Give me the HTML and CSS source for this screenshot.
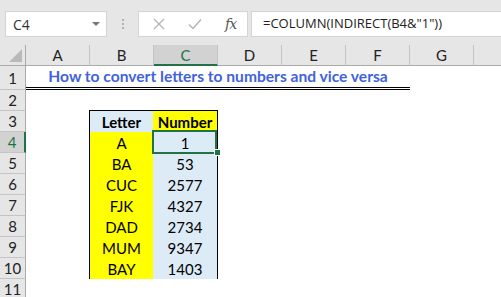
FILE: index.html
```html
<!DOCTYPE html>
<html>
<head>
<meta charset="utf-8">
<link rel="stylesheet" href="styles.css">
</head>
<body>
<div class="app">
  <div class="toolbar">
    <div class="namebox"><span class="ref">C4</span><span class="caret"></span></div>
    <div class="grip"><i></i><i></i><i></i></div>
    <div class="fxbox">
      <svg class="ico" width="12" height="12" viewBox="0 0 12 12"><path d="M1 1L11 11M11 1L1 11" stroke="#b4b4b4" stroke-width="1.3" fill="none"/></svg>
      <svg class="ico" width="14" height="12" viewBox="0 0 14 12"><path d="M1 6.5L5 10.5L13 1.5" stroke="#b4b4b4" stroke-width="1.5" fill="none"/></svg>
      <span class="fx">fx</span>
    </div>
    <div class="formula">=COLUMN(INDIRECT(B4&amp;"1"))</div>
  </div>
  <div class="sheet">
    <div class="corner"><span class="tri"></span></div>
    <div class="colh">A</div>
    <div class="colh">B</div>
    <div class="colh sel">C</div>
    <div class="colh">D</div>
    <div class="colh">E</div>
    <div class="colh">F</div>
    <div class="colh">G</div>
    <div class="colh last"></div>

    <div class="rowh r1">1</div>
    <div class="title">How to convert letters to numbers and vice versa</div>
    <div class="rowh">2</div>
    <div class="rowh">3</div>
    <div class="rowh sel">4</div>
    <div class="rowh">5</div>
    <div class="rowh">6</div>
    <div class="rowh">7</div>
    <div class="rowh">8</div>
    <div class="rowh">9</div>
    <div class="rowh">10</div>
    <div class="rowh">11</div>

    <div class="tbl">
      <div class="c hd blue">Letter</div>
      <div class="c hd yellow">Number</div>
      <div class="c yellow">A</div>
      <div class="c blue active">1<span class="selbox"></span><span class="handle"></span></div>
      <div class="c yellow">BA</div>
      <div class="c blue">53</div>
      <div class="c yellow">CUC</div>
      <div class="c blue">2577</div>
      <div class="c yellow">FJK</div>
      <div class="c blue">4327</div>
      <div class="c yellow">DAD</div>
      <div class="c blue">2734</div>
      <div class="c yellow">MUM</div>
      <div class="c blue">9347</div>
      <div class="c yellow">BAY</div>
      <div class="c blue">1403</div>
    </div>
  </div>
</div>
</body>
</html>
```
FILE: styles.css
```css
* { box-sizing: border-box; }
html, body { margin: 0; padding: 0; background: #fff; }
.app { width: 501px; height: 297px; overflow: hidden; font-family: "Lato", "Liberation Sans", sans-serif; }

.toolbar {
  height: 45px;
  background: #e6e6e6;
  display: flex;
  align-items: flex-start;
  padding-top: 11px;
  padding-left: 5px;
}
.namebox {
  width: 102px; height: 26px;
  background: #fff;
  border: 1px solid #d4d4d4;
  display: flex; align-items: center; justify-content: space-between;
  padding: 0 6px 0 7px;
}
.ref { font-family: "Open Sans", "Liberation Sans", sans-serif; font-size: 14px; color: #333; }
.caret { width: 0; height: 0; border-left: 4px solid transparent; border-right: 4px solid transparent; border-top: 4px solid #777; }
.grip { width: 31px; height: 26px; display: flex; flex-direction: column; align-items: center; justify-content: center; gap: 2px; }
.grip i { width: 2px; height: 2px; background: #b0b0b0; display: block; }
.fxbox {
  width: 110px; height: 26px;
  background: #fff;
  border: 1px solid #d4d4d4;
  display: flex; align-items: center;
  padding-left: 14px;
}
.fxbox .ico:first-child { margin-right: 23px; }
.fxbox .ico:nth-child(2) { margin-right: 23px; }
.fx { font-family: "DejaVu Serif", "Liberation Serif", serif; font-style: italic; font-size: 14px; color: #555; letter-spacing: -1px; }
.formula {
  flex: 1; height: 26px; margin-left: 3px;
  background: #fff;
  border: 1px solid #d4d4d4; border-right: none;
  font-family: "Open Sans", "Liberation Sans", sans-serif; font-size: 13px; color: #222;
  padding-left: 11px; line-height: 23px;
}

.sheet {
  display: grid;
  grid-template-columns: 26px repeat(7, 64px) 1fr;
  grid-template-rows: 21px 24px repeat(10, 21px);
  font-size: 15px;
  color: #000;
}
.corner { background: #e6e6e6; border-right: 1px solid #ababab; border-bottom: 1px solid #ababab; position: relative; }
.tri { position: absolute; right: 3px; bottom: 3px; width: 0; height: 0; border-left: 13px solid transparent; border-bottom: 13px solid #b9b9b9; }
.colh {
  background: #e6e6e6;
  border-right: 1px solid #c4c4c4;
  border-bottom: 1px solid #ababab;
  display: flex; align-items: center; justify-content: center;
  font-size: 15px; color: #222;
}
.colh.last { border-right: none; }
.colh.sel { background: #d2d2d2; color: #217346; border-bottom: 2px solid #217346; }
.rowh {
  grid-column: 1;
  background: #e6e6e6;
  border-right: 1px solid #ababab;
  border-bottom: 1px solid #c4c4c4;
  display: flex; align-items: center; justify-content: center;
  color: #222;
}
.rowh.sel { background: #d2d2d2; color: #217346; border-right: 2px solid #217346; }
.title {
  grid-column: 2 / 8;
  grid-row: 2;
  border-bottom: 3px double #000;
  text-align: center;
  font-weight: bold;
  color: #3f63dc;
  font-size: 15.6px;
  line-height: 21px;
}
.tbl {
  grid-column: 3 / 5;
  grid-row: 4 / 12;
  margin: -1px 0 0 -1px;
  border: 1px solid #000;
  display: grid;
  grid-template-columns: 63px 64px;
  grid-template-rows: repeat(8, 21px);
}
.c { display: flex; align-items: center; justify-content: center; font-size: 15px; }
.hd { font-weight: bold; }
.yellow { background: #ffff00; }
.blue { background: #ddebf7; }
.active { position: relative; }
.selbox { position: absolute; left: -1px; top: -2px; width: 65px; height: 24px; border: 2px solid #217346; }
.handle { position: absolute; left: 61px; top: 17px; width: 7px; height: 7px; background: #217346; border: 1px solid #fff; }
```
